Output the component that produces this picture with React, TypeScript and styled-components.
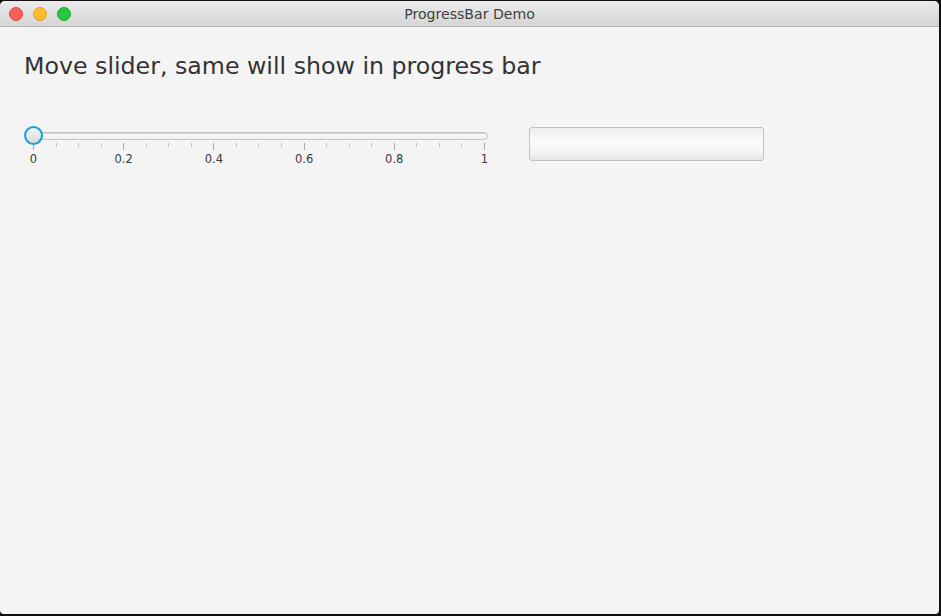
import React from 'react'
import styled, { createGlobalStyle } from 'styled-components'

const GlobalStyle = createGlobalStyle`
  html, body {
    margin: 0;
    padding: 0;
    background: #111;
  }
  #root {
    width: 941px;
    height: 616px;
  }
`

const Window = styled.div`
  width: 939px;
  height: 613px;
  margin-top: 1px;
  background: #f4f4f4;
  border-radius: 5px 5px 4px 4px;
  overflow: hidden;
  display: flex;
  flex-direction: column;
`

const TitleBar = styled.div`
  height: 25px;
  flex: none;
  display: flex;
  align-items: center;
  justify-content: center;
  position: relative;
  background: linear-gradient(#ebebeb, #d5d5d5);
  border-bottom: 1px solid #b4b4b4;
  font-family: 'DejaVu Sans', Verdana, sans-serif;
  font-size: 14.1px;
  color: #404040;
`

const Lights = styled.div`
  position: absolute;
  left: 9px;
  top: 6px;
  display: flex;
  gap: 10px;
`

const Light = styled.span<{ $fill: string; $edge: string }>`
  width: 12px;
  height: 12px;
  border-radius: 50%;
  background: ${(p) => p.$fill};
  border: 0.5px solid ${(p) => p.$edge};
`

const Content = styled.div`
  padding: 24px 24px 0 24px;
  display: flex;
  flex-direction: column;
  gap: 43px;
`

const Heading = styled.div`
  font-family: 'DejaVu Sans', Verdana, sans-serif;
  font-size: 23.7px;
  line-height: 30px;
  color: #333;
`

const Row = styled.div`
  display: flex;
  align-items: flex-start;
`

const Slider = styled.div`
  width: 464px;
  position: relative;
  padding-top: 8px;
`

const Track = styled.div`
  margin-left: 2px;
  height: 6px;
  border-radius: 4px;
  background: linear-gradient(#fdfdfd, #eeeeee);
  border: 1px solid #c8c8c8;
  box-shadow: inset 0 1px 0 #d2d2d2;
`

const Thumb = styled.div`
  position: absolute;
  left: 0;
  top: 2px;
  width: 15px;
  height: 15px;
  border-radius: 50%;
  border: 2px solid #0fa2dc;
  background: linear-gradient(#f3f3f3, #dadada);
`

const Ticks = styled.div`
  margin: 3px 0 0 9px;
  width: 452px;
  display: flex;
  justify-content: space-between;
  align-items: flex-start;
`

const Tick = styled.span<{ $major: boolean }>`
  width: 1px;
  height: ${(p) => (p.$major ? 7 : 4)}px;
  background: ${(p) => (p.$major ? '#a9a9a9' : '#c4c4c4')};
`

const Labels = styled.div`
  margin: 2px 0 0 9px;
  width: 452px;
  display: flex;
  justify-content: space-between;
`

const TickLabel = styled.span`
  width: 1px;
  display: flex;
  justify-content: center;
  white-space: nowrap;
  font-family: 'DejaVu Sans', Verdana, sans-serif;
  font-size: 11.5px;
  color: #3a3a3a;
`

const Progress = styled.div`
  margin: 3px 0 0 41px;
  width: 233px;
  height: 32px;
  border: 1px solid #c2c2c2;
  border-radius: 3px;
  background: linear-gradient(#eeeeee, #fbfbfb 40%, #f6f6f6 70%, #e6e6e6);
`

const labels = ['0', '0.2', '0.4', '0.6', '0.8', '1']

export default function App() {
  return (
    <>
      <GlobalStyle />
      <Window>
        <TitleBar>
          <Lights>
            <Light $fill="#fe5f57" $edge="#e0443e" />
            <Light $fill="#febc2e" $edge="#dea123" />
            <Light $fill="#28c840" $edge="#1aab29" />
          </Lights>
          ProgressBar Demo
        </TitleBar>
        <Content>
          <Heading>Move slider, same will show in progress bar</Heading>
          <Row>
            <Slider>
              <Track />
              <Thumb />
              <Ticks>
                {Array.from({ length: 21 }, (_, i) => (
                  <Tick key={i} $major={i % 4 === 0} />
                ))}
              </Ticks>
              <Labels>
                {labels.map((l) => (
                  <TickLabel key={l}>{l}</TickLabel>
                ))}
              </Labels>
            </Slider>
            <Progress />
          </Row>
        </Content>
      </Window>
    </>
  )
}
